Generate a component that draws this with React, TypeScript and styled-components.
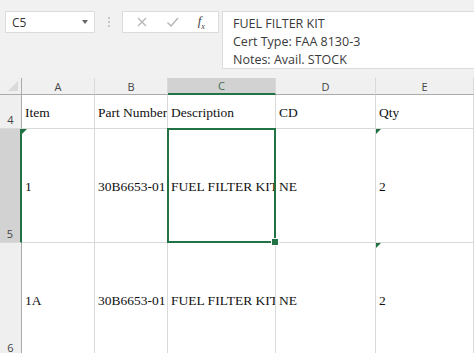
import React from 'react'
import styled, { createGlobalStyle, css } from 'styled-components'

const GlobalStyle = createGlobalStyle`
  html, body {
    margin: 0;
    padding: 0;
    background: #ffffff;
    overflow: hidden;
  }
`

const GREEN = '#217346'
const GRID = '#d9d9d9'

const Sheet = styled.div`
  width: 474px;
  height: 353px;
  overflow: hidden;
  font-family: 'Open Sans', 'Noto Sans', sans-serif;
`

const FormulaBar = styled.div`
  height: 78px;
  background: #f1f1f1;
  display: flex;
  align-items: flex-start;
  padding-top: 11px;
  padding-left: 5px;
  box-sizing: border-box;
`

const NameBox = styled.div`
  width: 90px;
  height: 22px;
  background: #fff;
  border: 1px solid #dcdcdc;
  box-sizing: border-box;
  display: flex;
  align-items: center;
  justify-content: space-between;
  padding: 0 6px 0 6px;
  font-size: 12px;
  color: #333;
`

const DropArrow = styled.span`
  width: 0;
  height: 0;
  border-left: 3.5px solid transparent;
  border-right: 3.5px solid transparent;
  border-top: 4px solid #666;
`

const Dots = styled.div`
  width: 27px;
  height: 22px;
  display: flex;
  flex-direction: column;
  align-items: center;
  justify-content: center;
  gap: 2px;
  span {
    width: 2px;
    height: 2px;
    background: #b8b8b8;
    border-radius: 1px;
  }
`

const FxBox = styled.div`
  width: 97px;
  height: 22px;
  background: #fff;
  border: 1px solid #dcdcdc;
  box-sizing: border-box;
  display: flex;
  align-items: center;
  justify-content: space-around;
  padding: 0 4px;
  margin-right: 3px;
`

const FxLabel = styled.span`
  font-family: 'Liberation Serif', serif;
  font-style: italic;
  font-size: 13px;
  color: #444;
  sub {
    font-size: 8px;
  }
`

const FormulaText = styled.div`
  flex: 1;
  height: 58px;
  background: #fff;
  border: 1px solid #dcdcdc;
  border-right: none;
  box-sizing: border-box;
  padding: 3px 0 0 10px;
  font-size: 12.5px;
  line-height: 18px;
  color: #3a3a3a;
`

const Grid = styled.div`
  display: grid;
  grid-template-columns: 22px 73px 73px 108px 100px 98px;
  grid-template-rows: 17px 34px 114px 114px;
`

const ColHead = styled.div<{ $active?: boolean }>`
  background: ${(p) => (p.$active ? '#d2d2d2' : '#f0f0f0')};
  border-right: 1px solid ${GRID};
  border-bottom: 1px solid ${(p) => (p.$active ? GREEN : '#ababab')};
  ${(p) => p.$active && css`border-bottom-width: 2px;`}
  box-sizing: border-box;
  display: flex;
  align-items: center;
  justify-content: center;
  font-size: 11px;
  color: ${(p) => (p.$active ? '#3f6e55' : '#444')};
`

const Corner = styled.div`
  background: #f0f0f0;
  border-right: 1px solid #ababab;
  border-bottom: 1px solid #ababab;
  box-sizing: border-box;
  position: relative;
  &::after {
    content: '';
    position: absolute;
    right: 3px;
    bottom: 3px;
    width: 0;
    height: 0;
    border-left: 10px solid transparent;
    border-bottom: 10px solid #dadada;
  }
`

const RowHead = styled.div<{ $active?: boolean }>`
  background: ${(p) => (p.$active ? '#d2d2d2' : '#efefef')};
  border-right: ${(p) => (p.$active ? `2px solid ${GREEN}` : '1px solid #ababab')};
  border-bottom: 1px solid ${GRID};
  box-sizing: border-box;
  display: flex;
  align-items: flex-end;
  justify-content: center;
  padding-bottom: 1px;
  font-size: 11px;
  color: #444;
`

const Cell = styled.div<{ $flag?: boolean; $selected?: boolean }>`
  position: relative;
  border-right: 1px solid ${GRID};
  border-bottom: 1px solid ${GRID};
  box-sizing: border-box;
  display: flex;
  align-items: center;
  padding-left: 3px;
  padding-top: 2px;
  font-family: 'Liberation Serif', 'Times New Roman', serif;
  font-size: 13.5px;
  color: #111;
  min-width: 0;

  ${(p) =>
    p.$flag &&
    css`
      &::before {
        content: '';
        position: absolute;
        left: 0;
        top: 0;
        width: 0;
        height: 0;
        border-top: 5px solid #1e7145;
        border-right: 5px solid transparent;
      }
    `}

  ${(p) =>
    p.$selected &&
    css`
      &::after {
        content: '';
        position: absolute;
        left: -1px;
        top: -1px;
        right: -1px;
        bottom: -1px;
        border: 2px solid ${GREEN};
        z-index: 2;
      }
    `}
`

const CellText = styled.span`
  white-space: nowrap;
  overflow: hidden;
`

const FillHandle = styled.span`
  position: absolute;
  right: -4px;
  bottom: -4px;
  width: 6px;
  height: 6px;
  background: ${GREEN};
  border: 1px solid #fff;
  z-index: 3;
`

const columns = ['A', 'B', 'C', 'D', 'E']

const rows = [
  { n: 4, cells: ['Item', 'Part Number', 'Description', 'CD', 'Qty'], flags: [] as number[] },
  { n: 5, cells: ['1', '30B6653-01', 'FUEL FILTER KIT', 'NE', '2'], flags: [0, 4] },
  { n: 6, cells: ['1A', '30B6653-01', 'FUEL FILTER KIT', 'NE', '2'], flags: [4] },
]

export default function App() {
  return (
    <Sheet>
      <GlobalStyle />
      <FormulaBar>
        <NameBox>
          <span>C5</span>
          <DropArrow />
        </NameBox>
        <Dots>
          <span />
          <span />
          <span />
        </Dots>
        <FxBox>
          <svg width="12" height="12" viewBox="0 0 12 12">
            <path d="M2 2 L10 10 M10 2 L2 10" stroke="#b5b5b5" strokeWidth="1.3" fill="none" />
          </svg>
          <svg width="13" height="12" viewBox="0 0 13 12">
            <path d="M1.5 6.5 L5 10 L12 2" stroke="#b5b5b5" strokeWidth="1.4" fill="none" />
          </svg>
          <FxLabel>
            f<sub>x</sub>
          </FxLabel>
        </FxBox>
        <FormulaText>
          <div>FUEL FILTER KIT</div>
          <div>Cert Type: FAA 8130-3</div>
          <div>Notes: Avail. STOCK</div>
        </FormulaText>
      </FormulaBar>

      <Grid>
        <Corner />
        {columns.map((c) => (
          <ColHead key={c} $active={c === 'C'}>
            {c}
          </ColHead>
        ))}
        {rows.map((r) => (
          <React.Fragment key={r.n}>
            <RowHead $active={r.n === 5}>{r.n}</RowHead>
            {r.cells.map((text, i) => {
              const selected = r.n === 5 && i === 2
              return (
                <Cell key={i} $flag={r.flags.includes(i)} $selected={selected}>
                  <CellText>{text}</CellText>
                  {selected && <FillHandle />}
                </Cell>
              )
            })}
          </React.Fragment>
        ))}
      </Grid>
    </Sheet>
  )
}
